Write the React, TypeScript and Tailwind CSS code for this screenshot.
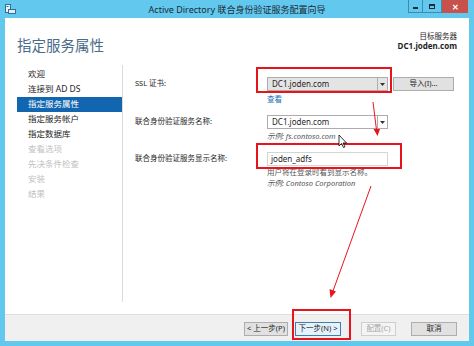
const FONT = "font-['Noto_Sans','Noto_Sans_CJK_SC',sans-serif]";

const navItems = [
  { label: "欢迎", state: "done" },
  { label: "连接到 AD DS", state: "done" },
  { label: "指定服务属性", state: "active" },
  { label: "指定服务帐户", state: "done" },
  { label: "指定数据库", state: "done" },
  { label: "查看选项", state: "off" },
  { label: "先决条件检查", state: "off" },
  { label: "安装", state: "off" },
  { label: "结果", state: "off" },
];

const TitleIcon = () => (
  <svg width="11" height="10" viewBox="0 0 11 10">
    <rect x="0.5" y="0.5" width="5" height="8" fill="#eaf6fc" stroke="#2f6f9a" />
    <rect x="3.5" y="5.5" width="7" height="4" fill="#dfeef7" stroke="#2f6f9a" />
    <rect x="1.5" y="2" width="2" height="1" fill="#2f6f9a" />
  </svg>
);

const Combo = ({ value, gray }: { value: string; gray?: boolean }) => (
  <div
    className={`flex h-[14px] w-[121px] items-center border border-[#acacac] ${
      gray ? "bg-[#e4e4e4]" : "bg-white"
    }`}
  >
    <span className="flex-1 pl-[4px] text-[8px] leading-none text-[#1e1e1e]">{value}</span>
    <span className="flex h-full w-[10px] items-center justify-center border-l border-[#acacac]">
      <svg width="5" height="3" viewBox="0 0 5 3">
        <path d="M0 0 H5 L2.5 3 Z" fill="#333" />
      </svg>
    </span>
  </div>
);

const FooterButton = ({
  children,
  w,
  kind,
}: {
  children: string;
  w: string;
  kind?: "focus" | "disabled";
}) => {
  const look =
    kind === "focus"
      ? "border-[#3c7fb1] bg-[#e5f1fb] text-[#1e1e1e]"
      : kind === "disabled"
        ? "border-[#cfcfcf] bg-[#f4f4f4] text-[#a8a8a8]"
        : "border-[#adadad] bg-[#e1e1e1] text-[#1e1e1e]";
  return (
    <div className={`flex h-[14px] ${w} items-center justify-center border text-[7.5px] leading-none ${look}`}>
      {children}
    </div>
  );
};

export default function App() {
  return (
    <div className={`relative flex h-[346px] w-[474px] flex-col overflow-hidden bg-[#62c8ee] ${FONT}`}>
      {/* title bar */}
      <div className="grid h-[18px] grid-cols-[1fr_auto_1fr]">
        <div className="flex items-center pl-[5px] pb-[1px]">
          <TitleIcon />
        </div>
        <div className="flex items-center text-[9px] leading-none text-[#1b2a36]">
          Active Directory 联合身份验证服务配置向导
        </div>
        <div className="flex items-start justify-end pr-[6px]">
          <div className="flex h-[13px] w-[15px] items-center justify-center border border-t-0 border-[#3b8db0]">
            <div className="mt-[4px] h-[2px] w-[5px] bg-[#1b2a36]" />
          </div>
          <div className="flex h-[13px] w-[19px] items-center justify-center border border-l-0 border-t-0 border-[#3b8db0]">
            <div className="h-[5px] w-[6px] border-[1.5px] border-t-[2px] border-[#1b2a36]" />
          </div>
          <div className="flex h-[13px] w-[26px] items-center justify-center bg-[#c9514b] text-[8px] font-bold leading-none text-white">
            ✕
          </div>
        </div>
      </div>

      {/* window client */}
      <div className="mx-[5px] mb-[5px] flex flex-1 flex-col bg-white">
        {/* header */}
        <div className="flex h-[47px] justify-between px-[12px]">
          <div className="pt-[18px] text-[14.5px] leading-[18px] text-[#4a6b8a]">指定服务属性</div>
          <div className="pt-[14px] text-right leading-[9px] text-[#1e1e1e]">
            <div className="text-[7.5px]">目标服务器</div>
            <div className="text-[8px] font-bold">DC1.joden.com</div>
          </div>
        </div>

        {/* body */}
        <div className="flex flex-1">
          <div className="ml-[12px] w-[105px] pt-[2px]">
            {navItems.map((item) => (
              <div
                key={item.label}
                className={`flex h-[15px] items-center pl-[11px] text-[8.5px] leading-none ${
                  item.state === "active"
                    ? "bg-[#1266b0] text-white"
                    : item.state === "off"
                      ? "text-[#c2c2c2]"
                      : "text-[#1e1e1e]"
                }`}
              >
                {item.label}
              </div>
            ))}
          </div>
          <div className="mb-[12px] w-px bg-[#dadada]" />

          <div className="flex flex-col pl-[12px] text-[7.5px] leading-none text-[#1e1e1e]">
            <div className="mt-[12px] flex h-[14px] items-center">
              <span className="w-[132px]">SSL 证书:</span>
              <Combo value="DC1.joden.com" gray />
              <div className="ml-[5px] flex h-[14px] w-[61px] items-center justify-center border border-[#adadad] bg-[#e1e1e1]">
                导入(I)...
              </div>
            </div>
            <div className="mt-[3px] flex h-[12px] items-center pl-[132px] text-[#1a6fb5]">查看</div>

            <div className="mt-[9px] flex h-[14px] items-center">
              <span className="w-[132px]">联合身份验证服务名称:</span>
              <Combo value="DC1.joden.com" />
            </div>
            <div className="mt-[2px] flex h-[12px] items-center pl-[132px] italic text-[#555]">
              示例: fs.contoso.com
            </div>

            <div className="mt-[9px] flex h-[14px] items-center">
              <span className="w-[130px]">联合身份验证服务显示名称:</span>
              <div className="ml-[2px] flex h-[14px] w-[121px] items-center border border-[#d4d4d4] bg-white pl-[3px] text-[8px]">
                joden_adfs
              </div>
            </div>
            <div className="mt-[2px] flex h-[10px] items-center pl-[132px] text-[#555]">
              用户将在登录时看到显示名称。
            </div>
            <div className="flex h-[11px] items-center pl-[132px] italic text-[#555]">
              示例: Contoso Corporation
            </div>
          </div>
        </div>

        {/* footer */}
        <div className="flex h-[27px] items-start justify-end gap-[7px] border-t border-[#dedede] bg-[#f0f0f0] pr-[12px] pt-[7px]">
          <FooterButton w="w-[44px]">{"< 上一步(P)"}</FooterButton>
          <FooterButton w="w-[46px]" kind="focus">{"下一步(N) >"}</FooterButton>
          <div className="ml-[13px]">
            <FooterButton w="w-[35px]" kind="disabled">配置(C)</FooterButton>
          </div>
          <div className="ml-[8px]">
            <FooterButton w="w-[46px]">取消</FooterButton>
          </div>
        </div>
      </div>

      {/* annotations */}
      <div className="absolute left-[256px] top-[67px] h-[26px] w-[136px] border-2 border-[#e8141b]" />
      <div className="absolute left-[256px] top-[143px] h-[26px] w-[146px] border-2 border-[#e8141b]" />
      <div className="absolute left-[292px] top-[309px] h-[31px] w-[59px] border-2 border-[#e8141b]" />
      <svg className="pointer-events-none absolute left-0 top-0" width="474" height="346" viewBox="0 0 474 346">
        <line x1="373" y1="102" x2="376.5" y2="130" stroke="#e8141b" strokeWidth="1" />
        <path d="M373.5 129 L380 129 L377.5 136 Z" fill="#e8141b" />
        <line x1="371" y1="186" x2="333" y2="291" stroke="#e8141b" strokeWidth="1" />
        <path d="M329.5 289 L336 291.5 L330.5 298 Z" fill="#e8141b" />
        <path d="M339 135 L339 146 L341.5 143.5 L343.5 147.5 L345 146.8 L343 143 L346.5 143 Z" fill="#fff" stroke="#000" strokeWidth="0.8" />
      </svg>
    </div>
  );
}
